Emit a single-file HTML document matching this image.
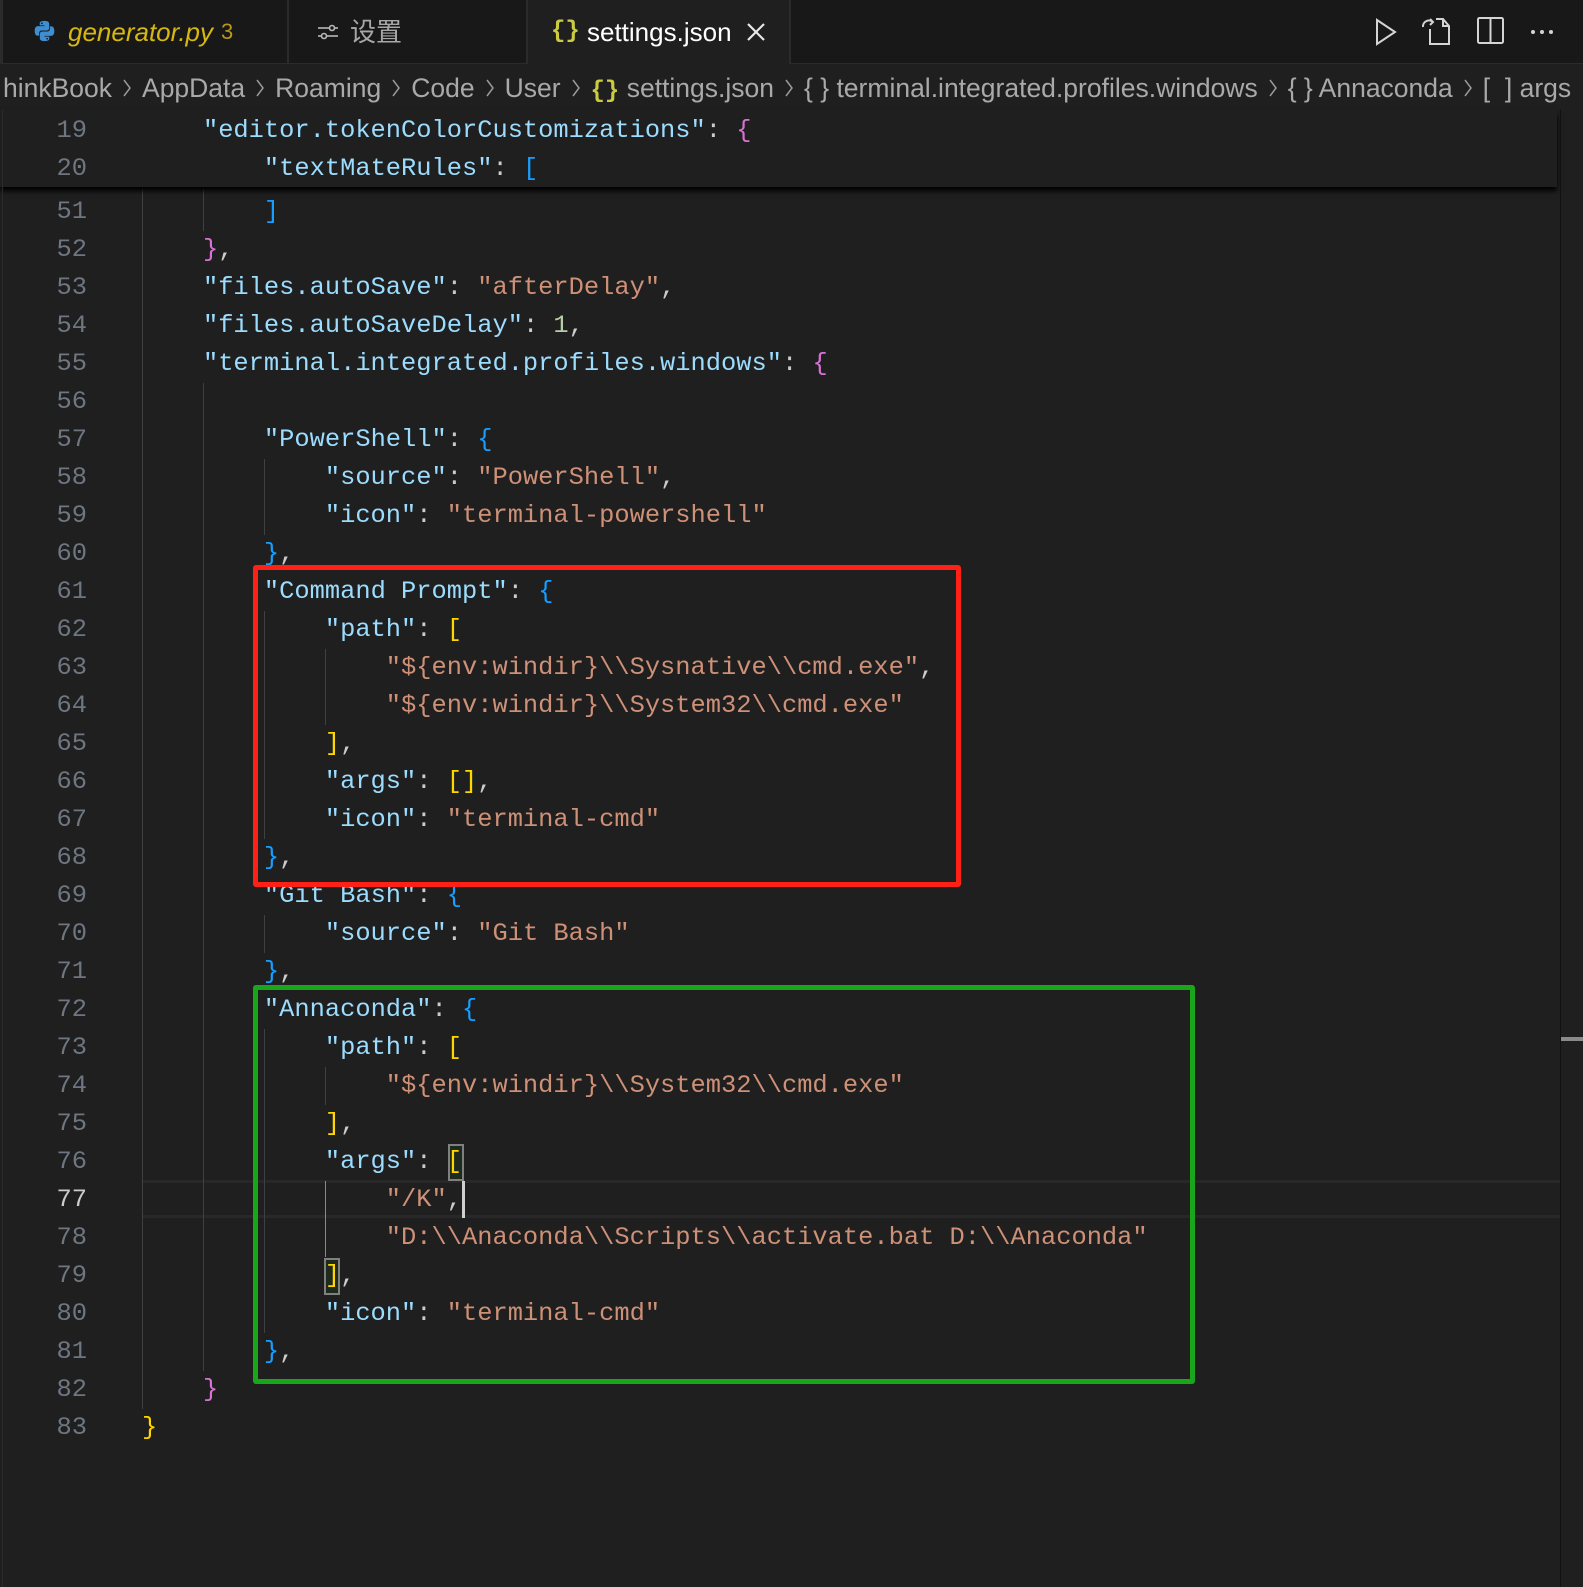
<!DOCTYPE html>
<html><head><meta charset="utf-8">
<style>
*{margin:0;padding:0;box-sizing:border-box}
body{width:1583px;height:1587px;background:#1f1f1f;position:relative;overflow:hidden;font-family:"Liberation Sans","Noto Sans CJK SC",sans-serif}
.tabbar{position:absolute;left:0;top:0;width:1583px;height:64px;background:#181818;border-bottom:1px solid #2b2b2b}
.tab{position:absolute;top:0;height:64px;font-size:25px;line-height:64px;white-space:nowrap}
.crumb{position:absolute;left:0;top:64px;height:46px;width:1583px;background:#1f1f1f;color:#a9a9a9;font-size:26.5px;line-height:48px;white-space:nowrap;padding-left:3px}
.crumb svg{display:inline-block;vertical-align:middle;margin:0 10px 4px 10px}
.ln{position:absolute;left:0;width:87px;text-align:right;font-family:"Liberation Mono",monospace;font-size:25.4px;color:#6e7681;height:38px;line-height:38px}
.code{position:absolute;left:142px;font-family:"Liberation Mono",monospace;font-size:25.4px;white-space:pre;height:38px;line-height:38px;color:#cccccc}
.k{color:#9cdcfe}.s1{color:#ce9178}.n{color:#b5cea8}
.p{color:#da70d6}.b{color:#179fff}.y{color:#ffd700}
.g{position:absolute;width:1px;background:#404040}
</style></head><body>
<div class="tabbar">
  <div style="position:absolute;left:0;top:0;width:3px;height:64px;background:#2b2b2b"></div>
  <div class="tab" style="left:3px;width:286px;border-right:2px solid #2b2b2b">
    <svg style="position:absolute;left:30px;top:20px" width="23" height="22" viewBox="0 0 24 24"><path fill="#3e8ed0" d="M11.9 1C6.5 1 6.8 3.4 6.8 3.4v2.5h5.2v.8H4.8S1.3 6.3 1.3 11.8s3 5.3 3 5.3h1.8v-2.6s-.1-3 3-3h5.1s2.9 0 2.9-2.8V4s.4-3-5.2-3zM9.1 2.6a.9.9 0 110 1.9.9.9 0 010-1.9z"/><path fill="#3e8ed0" d="M12.1 23c5.4 0 5.1-2.4 5.1-2.4v-2.5H12v-.8h7.2s3.5.4 3.5-5.1-3-5.3-3-5.3h-1.8v2.6s.1 3-3 3H9.8s-2.9 0-2.9 2.8V20s-.4 3 5.2 3zm2.8-1.6a.9.9 0 110-1.9.9.9 0 010 1.9z"/></svg>
    <span style="position:absolute;left:65px;color:#d7b711;font-style:italic;font-size:26px">generator.py</span>
    <span style="position:absolute;left:218px;color:#b89a12;font-size:22px">3</span>
  </div>
  <div class="tab" style="left:289px;width:239px;border-right:2px solid #2b2b2b">
    <svg style="position:absolute;left:28px;top:22px" width="22" height="20" viewBox="0 0 22 20" fill="none" stroke="#b8b8b8" stroke-width="1.6"><line x1="1" y1="6" x2="12" y2="6"/><circle cx="15" cy="6" r="2.5"/><line x1="18" y1="6" x2="21" y2="6"/><line x1="1" y1="14" x2="4" y2="14"/><circle cx="7" cy="14" r="2.5"/><line x1="10" y1="14" x2="21" y2="14"/></svg>
    <span style="position:absolute;left:61px;color:#a8a8a8;font-size:26px">设置</span>
  </div>
  <div class="tab" style="left:528px;width:263px;background:#1f1f1f;height:65px;border-right:2px solid #2b2b2b">
    <span style="position:absolute;left:23px;color:#cbcb41;font-family:'Liberation Mono',monospace;font-size:24px;font-weight:bold">{}</span>
    <span style="position:absolute;left:59px;color:#ffffff;font-size:26px">settings.json</span>
    <svg style="position:absolute;left:218px;top:22px" width="20" height="20" viewBox="0 0 20 20" stroke="#e8e8e8" stroke-width="2.2"><line x1="2" y1="2" x2="18" y2="18"/><line x1="18" y1="2" x2="2" y2="18"/></svg>
  </div>
  <svg style="position:absolute;left:1374px;top:18px" width="24" height="28" viewBox="0 0 24 28" fill="none" stroke="#d4d4d4" stroke-width="2"><path d="M3 2 L21 14 L3 26 Z"/></svg>
  <svg style="position:absolute;left:1421px;top:16px" width="30" height="30" viewBox="0 0 30 30" fill="none" stroke="#d4d4d4" stroke-width="2"><path d="M9 13 V28 H28 V10 L22 3 H15"/><path d="M22 3 V10 H28"/><path d="M2 11 A6 6 0 0 1 12 6"/><path d="M9 3 L12 6 L9 9"/></svg>
  <svg style="position:absolute;left:1476px;top:16px" width="30" height="29" viewBox="0 0 30 29" fill="none" stroke="#d4d4d4" stroke-width="2"><rect x="2" y="2" width="25" height="25" rx="1.5"/><line x1="14.5" y1="2" x2="14.5" y2="27"/></svg>
  <svg style="position:absolute;left:1529px;top:28px" width="28" height="8" viewBox="0 0 28 8" fill="#d4d4d4"><circle cx="4" cy="4" r="2"/><circle cx="13" cy="4" r="2"/><circle cx="22" cy="4" r="2"/></svg>
</div>
<div class="crumb">hinkBook<svg width="10" height="20" viewBox="0 0 10 20" fill="none" stroke="#9a9a9a" stroke-width="1.5"><path d="M2 2 L8 10 L2 18"/></svg>AppData<svg width="10" height="20" viewBox="0 0 10 20" fill="none" stroke="#9a9a9a" stroke-width="1.5"><path d="M2 2 L8 10 L2 18"/></svg>Roaming<svg width="10" height="20" viewBox="0 0 10 20" fill="none" stroke="#9a9a9a" stroke-width="1.5"><path d="M2 2 L8 10 L2 18"/></svg>Code<svg width="10" height="20" viewBox="0 0 10 20" fill="none" stroke="#9a9a9a" stroke-width="1.5"><path d="M2 2 L8 10 L2 18"/></svg>User<svg width="10" height="20" viewBox="0 0 10 20" fill="none" stroke="#9a9a9a" stroke-width="1.5"><path d="M2 2 L8 10 L2 18"/></svg><span style="color:#cbcb41;font-weight:bold;font-family:'Liberation Mono',monospace;font-size:24px">{}</span> settings.json<svg width="10" height="20" viewBox="0 0 10 20" fill="none" stroke="#9a9a9a" stroke-width="1.5"><path d="M2 2 L8 10 L2 18"/></svg>{ } terminal.integrated.profiles.windows<svg width="10" height="20" viewBox="0 0 10 20" fill="none" stroke="#9a9a9a" stroke-width="1.5"><path d="M2 2 L8 10 L2 18"/></svg>{ } Annaconda<svg width="10" height="20" viewBox="0 0 10 20" fill="none" stroke="#9a9a9a" stroke-width="1.5"><path d="M2 2 L8 10 L2 18"/></svg>[ &nbsp;] args</div>

<div style="position:absolute;left:142px;top:1180px;width:1418px;height:38px;border-top:3px solid #282828;border-bottom:3px solid #282828"></div>

<div class="g" style="left:142px;top:186px;height:1223px"></div>
<div class="g" style="left:203px;top:186px;height:45px"></div>
<div class="g" style="left:203px;top:383px;height:988px"></div>
<div class="g" style="left:264px;top:459px;height:76px"></div>
<div class="g" style="left:264px;top:611px;height:228px"></div>
<div class="g" style="left:264px;top:915px;height:38px"></div>
<div class="g" style="left:264px;top:1029px;height:304px"></div>
<div class="g" style="left:325px;top:649px;height:76px"></div>
<div class="g" style="left:325px;top:1067px;height:38px"></div>
<div class="g" style="left:325px;top:1181px;height:76px;background:#8a8a8a"></div>

<div style="position:absolute;left:448px;top:1144px;width:16px;height:37px;border:2px solid #808080;background:#1d2a1d"></div>
<div style="position:absolute;left:324px;top:1258px;width:16px;height:37px;border:2px solid #808080;background:#1d2a1d"></div>
<div style="position:absolute;left:462px;top:1181px;width:3px;height:37px;background:#d0d0d0"></div>

<div class="ln" style="top:193px">51</div>
<div class="ln" style="top:231px">52</div>
<div class="ln" style="top:269px">53</div>
<div class="ln" style="top:307px">54</div>
<div class="ln" style="top:345px">55</div>
<div class="ln" style="top:383px">56</div>
<div class="ln" style="top:421px">57</div>
<div class="ln" style="top:459px">58</div>
<div class="ln" style="top:497px">59</div>
<div class="ln" style="top:535px">60</div>
<div class="ln" style="top:573px">61</div>
<div class="ln" style="top:611px">62</div>
<div class="ln" style="top:649px">63</div>
<div class="ln" style="top:687px">64</div>
<div class="ln" style="top:725px">65</div>
<div class="ln" style="top:763px">66</div>
<div class="ln" style="top:801px">67</div>
<div class="ln" style="top:839px">68</div>
<div class="ln" style="top:877px">69</div>
<div class="ln" style="top:915px">70</div>
<div class="ln" style="top:953px">71</div>
<div class="ln" style="top:991px">72</div>
<div class="ln" style="top:1029px">73</div>
<div class="ln" style="top:1067px">74</div>
<div class="ln" style="top:1105px">75</div>
<div class="ln" style="top:1143px">76</div>
<div class="ln" style="top:1181px;color:#cccccc">77</div>
<div class="ln" style="top:1219px">78</div>
<div class="ln" style="top:1257px">79</div>
<div class="ln" style="top:1295px">80</div>
<div class="ln" style="top:1333px">81</div>
<div class="ln" style="top:1371px">82</div>
<div class="ln" style="top:1409px">83</div>

<div class="code" style="top:193px">        <span class="b">]</span></div>
<div class="code" style="top:231px">    <span class="p">}</span>,</div>
<div class="code" style="top:269px">    <span class="k">"files.autoSave"</span>: <span class="s1">"afterDelay"</span>,</div>
<div class="code" style="top:307px">    <span class="k">"files.autoSaveDelay"</span>: <span class="n">1</span>,</div>
<div class="code" style="top:345px">    <span class="k">"terminal.integrated.profiles.windows"</span>: <span class="p">{</span></div>
<div class="code" style="top:421px">        <span class="k">"PowerShell"</span>: <span class="b">{</span></div>
<div class="code" style="top:459px">            <span class="k">"source"</span>: <span class="s1">"PowerShell"</span>,</div>
<div class="code" style="top:497px">            <span class="k">"icon"</span>: <span class="s1">"terminal-powershell"</span></div>
<div class="code" style="top:535px">        <span class="b">}</span>,</div>
<div class="code" style="top:573px">        <span class="k">"Command Prompt"</span>: <span class="b">{</span></div>
<div class="code" style="top:611px">            <span class="k">"path"</span>: <span class="y">[</span></div>
<div class="code" style="top:649px">                <span class="s1">"${env:windir}\\Sysnative\\cmd.exe"</span>,</div>
<div class="code" style="top:687px">                <span class="s1">"${env:windir}\\System32\\cmd.exe"</span></div>
<div class="code" style="top:725px">            <span class="y">]</span>,</div>
<div class="code" style="top:763px">            <span class="k">"args"</span>: <span class="y">[]</span>,</div>
<div class="code" style="top:801px">            <span class="k">"icon"</span>: <span class="s1">"terminal-cmd"</span></div>
<div class="code" style="top:839px">        <span class="b">}</span>,</div>
<div class="code" style="top:877px">        <span class="k">"Git Bash"</span>: <span class="b">{</span></div>
<div class="code" style="top:915px">            <span class="k">"source"</span>: <span class="s1">"Git Bash"</span></div>
<div class="code" style="top:953px">        <span class="b">}</span>,</div>
<div class="code" style="top:991px">        <span class="k">"Annaconda"</span>: <span class="b">{</span></div>
<div class="code" style="top:1029px">            <span class="k">"path"</span>: <span class="y">[</span></div>
<div class="code" style="top:1067px">                <span class="s1">"${env:windir}\\System32\\cmd.exe"</span></div>
<div class="code" style="top:1105px">            <span class="y">]</span>,</div>
<div class="code" style="top:1143px">            <span class="k">"args"</span>: <span class="y">[</span></div>
<div class="code" style="top:1181px">                <span class="s1">"/K"</span>,</div>
<div class="code" style="top:1219px">                <span class="s1">"D:\\Anaconda\\Scripts\\activate.bat D:\\Anaconda"</span></div>
<div class="code" style="top:1257px">            <span class="y">]</span>,</div>
<div class="code" style="top:1295px">            <span class="k">"icon"</span>: <span class="s1">"terminal-cmd"</span></div>
<div class="code" style="top:1333px">        <span class="b">}</span>,</div>
<div class="code" style="top:1371px">    <span class="p">}</span></div>
<div class="code" style="top:1409px"><span class="y">}</span></div>

<div style="position:absolute;left:0;top:110px;width:1557px;height:77px;background:#1f1f1f;box-shadow:0 4px 5px #000"></div>
<div class="ln" style="top:112px">19</div>
<div class="ln" style="top:150px">20</div>
<div class="code" style="top:112px">    <span class="k">"editor.tokenColorCustomizations"</span>: <span class="p">{</span></div>
<div class="code" style="top:150px">        <span class="k">"textMateRules"</span>: <span class="b">[</span></div>

<div style="position:absolute;left:2px;top:110px;width:1px;height:1477px;background:#2b2b2b"></div>
<div style="position:absolute;left:1560px;top:110px;width:1px;height:1477px;background:#111"></div>
<div style="position:absolute;left:1561px;top:1037px;width:22px;height:4px;background:#8a8a8a"></div>

<div style="position:absolute;left:253px;top:565px;width:708px;height:322px;border:5px solid #ff2016;border-radius:3px"></div>
<div style="position:absolute;left:253px;top:985px;width:942px;height:399px;border:5px solid #1aa61a;border-radius:3px"></div>
</body></html>
